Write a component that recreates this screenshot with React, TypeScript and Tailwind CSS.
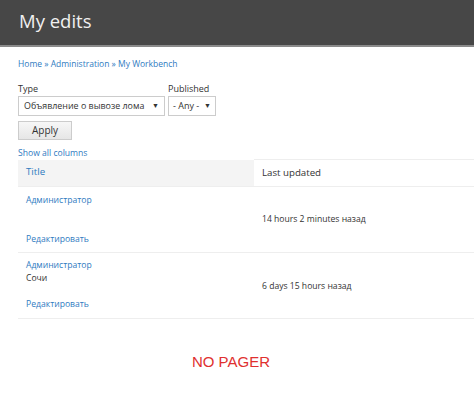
export default function App() {
  return (
    <div className="min-h-[399px] bg-white font-['Open_Sans',sans-serif] text-[#333]">
      <header className="h-[47px] bg-[#474747] border-b-2 border-[#8a8a8a] px-[19px] flex items-center">
        <h1 className="text-[18.5px] leading-none text-[#f0f0f0] pb-[2px]">My edits</h1>
      </header>

      <div className="pl-[18px]">
        <nav className="mt-[10px] text-[8.5px] text-[#2f7bbf] leading-[13px]">
          <a>Home</a> » <a>Administration</a> » <a>My Workbench</a>
        </nav>

        <div className="mt-[12px] flex gap-[3px] text-[9px]">
          <div className="flex flex-col">
            <label className="leading-[13px]">Type</label>
            <div className="mt-[1px] h-[20px] w-[147px] border border-[#ccc] flex items-center justify-between pl-[5px] pr-[5px] whitespace-nowrap">
              <span className="text-[8.9px]">Объявление о вывозе лома</span>
              <span className="text-[7px]">▼</span>
            </div>
          </div>
          <div className="flex flex-col">
            <label className="leading-[13px]">Published</label>
            <div className="mt-[1px] h-[20px] w-[48px] border border-[#ccc] flex items-center justify-between pl-[4px] pr-[4px] whitespace-nowrap">
              <span>- Any -</span>
              <span className="text-[7px]">▼</span>
            </div>
          </div>
        </div>

        <button className="mt-[4px] h-[19px] w-[54px] border border-[#ccc] bg-gradient-to-b from-[#f7f7f7] to-[#e6e6e6] text-[10px] leading-none">
          Apply
        </button>

        <div className="mt-[7px] text-[8.6px] text-[#2f7bbf] leading-[12px]">Show all columns</div>

        <table className="w-full border-collapse text-[8.6px]">
          <thead>
            <tr className="h-[27px] border-b border-[#eee]">
              <th className="w-[236px] bg-[#f4f4f4] text-left font-normal text-[9.7px] text-[#2f7bbf] pl-[8px]">Title</th>
              <th className="text-left font-normal text-[9.7px] pl-[8px] border-t border-[#eee]">Last updated</th>
            </tr>
          </thead>
          <tbody>
            <tr className="h-[65px] border-b border-[#eee]">
              <td className="pl-[8px] align-top">
                <div className="flex flex-col h-[65px] justify-between pt-[7px] pb-[6px]">
                  <span className="text-[#2f7bbf]">Администратор</span>
                  <span className="text-[#2f7bbf]">Редактировать</span>
                </div>
              </td>
              <td className="pl-[8px] align-middle">14 hours 2 minutes назад</td>
            </tr>
            <tr className="h-[65px] border-b border-[#eee]">
              <td className="pl-[8px] align-top">
                <div className="flex flex-col h-[65px] pt-[6px] pb-[7px]">
                  <span className="text-[#2f7bbf]">Администратор</span>
                  <span>Сочи</span>
                  <span className="mt-auto text-[#2f7bbf]">Редактировать</span>
                </div>
              </td>
              <td className="pl-[8px] align-middle pt-[1px]">6 days 15 hours назад</td>
            </tr>
          </tbody>
        </table>
      </div>

      <div className="mt-[32px] text-center pr-[12px] font-['Liberation_Sans',sans-serif] text-[15px] text-[#e0302f]">
        NO PAGER
      </div>
    </div>
  );
}
